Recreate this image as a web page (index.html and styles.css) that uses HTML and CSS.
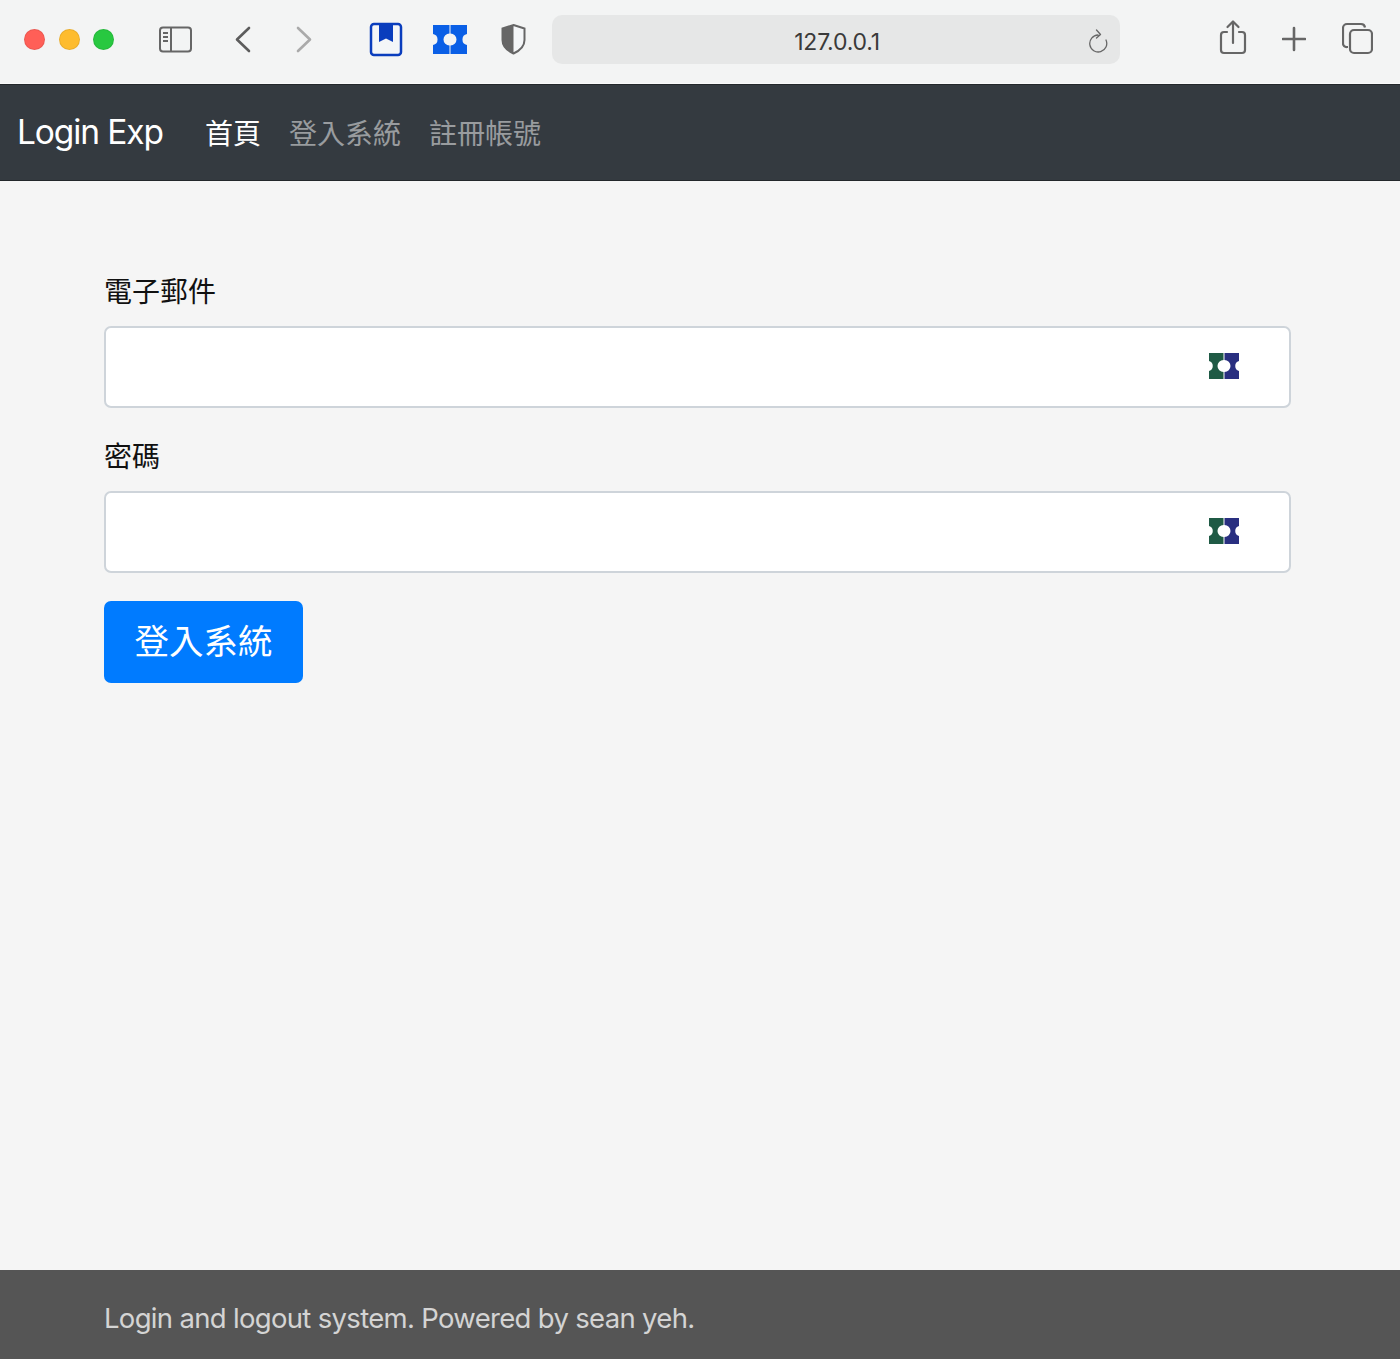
FILE: index.html
```html
<!DOCTYPE html>
<html lang="zh-Hant">
<head>
<meta charset="utf-8">
<title>Login Exp</title>
<link rel="stylesheet" href="styles.css">
</head>
<body>
<header class="toolbar">
  <div class="lights"><span class="light red"></span><span class="light yellow"></span><span class="light green"></span></div>
  <svg class="tool sidebar" viewBox="0 0 33 49" fill="none" stroke="#666" stroke-width="2"><rect x="1" y="12.500" width="31" height="24" rx="3"/><path d="M12 12.500V36.500M4 18h5M4 22h5M4 26h5"/></svg>
  <svg class="tool back" viewBox="0 0 16 49" fill="none" stroke="#5c5c5c" stroke-width="2.600" stroke-linecap="round" stroke-linejoin="round"><path d="M14 13 2 24.500 14 36"/></svg>
  <svg class="tool forward" viewBox="0 0 16 49" fill="none" stroke="#aaa" stroke-width="2.600" stroke-linecap="round" stroke-linejoin="round"><path d="M2 13 14 24.500 2 36"/></svg>
  <svg class="tool bookmark" viewBox="0 0 34 49"><rect x="2" y="9" width="30" height="31" rx="3" fill="#f4f6f8" stroke="#0a3dbd" stroke-width="2.500"/><path d="M10 9H24V27L17 23.500 10 27Z" fill="#0a3dbd"/></svg>
  <svg class="tool extension" viewBox="0 0 34 49"><path d="M0 10H16.500V18.500A6 6 0 0 0 16.500 30.500V39H0V30A5.600 5.600 0 0 0 0 19Z" fill="#0a5fe6"/><path d="M34 10H17.500V18.500A6 6 0 0 1 17.500 30.500V39H34V30A5.600 5.600 0 0 1 34 19Z" fill="#0a5fe6"/></svg>
  <svg class="tool shield" viewBox="0 0 25 49"><path d="M12.500 10 23.500 13.500V25C23.500 32 18 36 12.500 38.500 7 36 1.500 32 1.500 25V13.500Z" fill="#f4f6f8" stroke="#666" stroke-width="2"/><path d="M12.500 10V38.500C7 36 1.500 32 1.500 25V13.500Z" fill="#666"/></svg>
  <div class="address">
    <span class="url">127.0.0.1</span>
    <svg class="reload" viewBox="0 0 20 24" fill="none" stroke="#666" stroke-width="1.300" stroke-linecap="round" stroke-linejoin="round"><path d="M9 6A8.500 8.500 0 1 0 17 11M7.500 1l4 4.500-4 3.500"/></svg>
  </div>
  <svg class="tool share" viewBox="0 0 28 49" fill="none" stroke="#666" stroke-width="2.200" stroke-linecap="round" stroke-linejoin="round"><path d="M8 17H5a3 3 0 0 0-3 3V35a3 3 0 0 0 3 3H23a3 3 0 0 0 3-3V20a3 3 0 0 0-3-3H20M14 28V7M8.500 12 14 6.500 19.500 12"/></svg>
  <svg class="tool plus" viewBox="0 0 24 49" fill="none" stroke="#666" stroke-width="2.600" stroke-linecap="round"><path d="M12 13V35M1 24H23"/></svg>
  <svg class="tool tabs" viewBox="0 0 31 49" fill="none" stroke="#666" stroke-width="2.200"><path d="M6 32H5a3.500 3.500 0 0 1-4-3.500V13a4 4 0 0 1 4-4H19a4 4 0 0 1 4 3.500"/><rect x="8" y="15" width="22" height="23" rx="4"/></svg>
</header>
<nav class="navbar">
  <a class="brand">Login Exp</a>
  <a class="nav-link active">首頁</a>
  <a class="nav-link">登入系統</a>
  <a class="nav-link">註冊帳號</a>
</nav>
<main class="content">
  <form class="login-form">
    <div class="form-group">
      <label class="form-label">電子郵件</label>
      <div class="field">
        <input class="form-control" type="email">
        <svg class="field-icon" viewBox="0 0 30 26"><path d="M0 0H14.500V7A6 6 0 0 0 14.500 19V26H0V18A5.200 5.200 0 0 0 0 8Z" fill="#1f5a45"/><path d="M30 0H15.500V7A6 6 0 0 1 15.500 19V26H30V18A5.200 5.200 0 0 1 30 8Z" fill="#292f80"/></svg>
      </div>
    </div>
    <div class="form-group">
      <label class="form-label">密碼</label>
      <div class="field">
        <input class="form-control" type="password">
        <svg class="field-icon" viewBox="0 0 30 26"><path d="M0 0H14.500V7A6 6 0 0 0 14.500 19V26H0V18A5.200 5.200 0 0 0 0 8Z" fill="#1f5a45"/><path d="M30 0H15.500V7A6 6 0 0 1 15.500 19V26H30V18A5.200 5.200 0 0 1 30 8Z" fill="#292f80"/></svg>
      </div>
    </div>
    <button class="btn-primary" type="button">登入系統</button>
  </form>
</main>
<footer class="footer">Login and logout system. Powered by sean yeh.</footer>
</body>
</html>
```
FILE: styles.css
```css
* { box-sizing: border-box; }
html, body { margin: 0; height: 100%; }
body {
  min-height: 1359px;
  display: flex;
  flex-direction: column;
  background: #f5f5f5;
  color: #212529;
  font-family: Inter, "Noto Sans CJK TC", sans-serif;
  font-size: 28px;
  line-height: 1.5;
}
.toolbar {
  height: 84px;
  flex: none;
  display: flex;
  align-items: stretch;
  padding: 15px 0 19px 24px;
  background: #f3f4f4;
  border-bottom: 1px solid #fafafa;
}
.lights { display: flex; align-items: center; gap: 13.500px; width: 90px; flex: none; }
.light { width: 21px; height: 21px; flex: none; border-radius: 50%; border: 1px solid rgba(0,0,0,.08); }
.red { background: #ff5f57; }
.yellow { background: #febc2e; }
.green { background: #28c840; }
.tool { display: block; height: 49px; flex: none; }
.sidebar { width: 33px; margin-left: 45px; }
.back { width: 16px; margin-left: 43px; }
.forward { width: 16px; margin-left: 45px; }
.bookmark { width: 34px; margin-left: 57px; }
.extension { width: 34px; margin-left: 30px; }
.shield { width: 25px; margin-left: 34px; }
.address {
  width: 568px;
  margin-left: 26px;
  flex: none;
  display: flex;
  align-items: center;
  justify-content: center;
  position: relative;
  background: #e6e7e7;
  border-radius: 10px;
}
.url { font-size: 23px; line-height: 1; color: #3a3a3a; letter-spacing: -0.2px; padding: 6px 0 0 2px; }
.reload { position: absolute; right: 11px; top: 14px; width: 20px; height: 24px; }
.share { width: 28px; margin-left: 99px; }
.plus { width: 24px; margin-left: 35px; }
.tabs { width: 31px; margin-left: 36px; }
.navbar {
  height: 97px;
  flex: none;
  display: flex;
  align-items: center;
  gap: 28px;
  padding: 0 17px;
  background: #343a40;
  border-top: 1px solid #23272b;
  border-bottom: 1px solid #23272b;
}
.brand { font-size: 33.500px; color: #fff; margin-right: 14px; letter-spacing: -1.100px; }
.nav-link { color: rgba(255,255,255,.5); padding-top: 2px; }
.nav-link.active { color: #fff; }
.content { flex: 1; padding: 90px 109.500px 0 104px; }
.form-group { margin-bottom: 28px; }
.form-label { display: block; margin-bottom: 12px; line-height: 43px; color: #111; }
.field { position: relative; }
.form-control {
  display: block;
  width: 100%;
  height: 82px;
  background: #fff;
  border: 2px solid #ced4da;
  border-radius: 7px;
}
.field-icon { position: absolute; top: 27px; right: 51.500px; width: 30px; height: 26px; }
.btn-primary {
  display: block;
  height: 82px;
  width: 199px;
  padding: 0 0 6px;
  border: 0;
  border-radius: 7px;
  background: #007bff;
  color: #fff;
  font-family: inherit;
  font-size: 34.500px;
}
.footer {
  height: 89px;
  flex: none;
  display: flex;
  align-items: center;
  padding: 8px 0 0 104px;
  background: #555;
  color: rgba(255,255,255,.75);
  font-size: 27.5px;
  letter-spacing: -0.680px;
}
```
